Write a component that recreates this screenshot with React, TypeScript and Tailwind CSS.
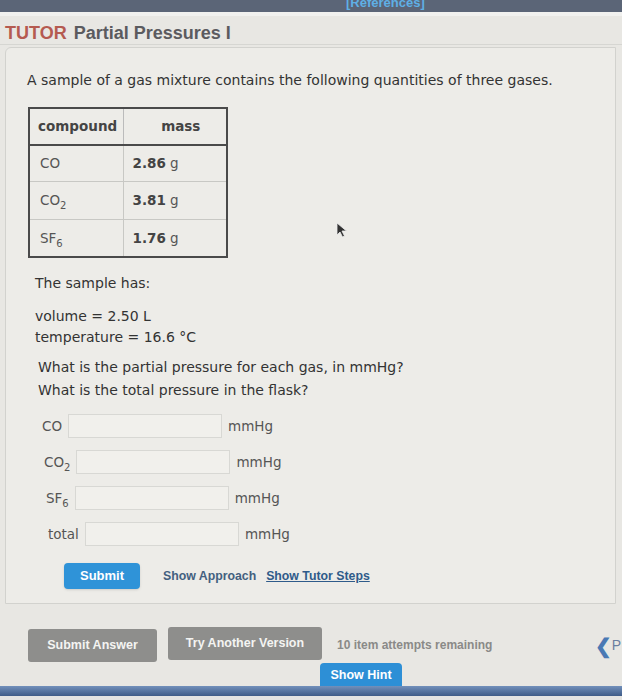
import React from 'react';

const body = { fontFamily: '"DejaVu Sans", Verdana, sans-serif' };
const arial = { fontFamily: '"Liberation Sans", Arial, sans-serif' };

function Sub({ base, n }: { base: string; n: string }) {
  return (
    <span>
      {base}
      <sub className="text-[10px] align-[-2px]">{n}</sub>
    </span>
  );
}

function AnswerRow({ label, pad }: { label: React.ReactNode; pad: string }) {
  return (
    <div className={`flex items-center h-[24px] ${pad}`}>
      <span className="text-[13.5px] text-[#555]">{label}</span>
      <div className="ml-[6px] w-[154px] h-[24px] border border-[#d8d8d4] bg-[#f1f0ec]" />
      <span className="ml-[6px] text-[13.5px] text-[#555]">mmHg</span>
    </div>
  );
}

export default function App() {
  return (
    <div className="relative w-[622px] h-[700px] overflow-hidden bg-[#e8e7e3]" style={body}>
      {/* top references bar */}
      <div className="h-[12px] bg-[#5b6577] overflow-hidden">
        <div className="pl-[346px] -mt-[5px] text-[13px] font-bold leading-[16px] text-[#5fb0e6]" style={arial}>
          [References]
        </div>
      </div>
      <div className="h-[4px] bg-[#f1f1ef]" />

      {/* title */}
      <div className="h-[29px] flex items-end pl-[5px] border-b border-[#d6d6d2]" style={arial}>
        <span className="text-[18px] font-bold text-[#b55a50] leading-none mb-[2px]">TUTOR</span>
        <span className="ml-[7px] text-[18px] font-bold text-[#5b5b5f] leading-none mb-[2px]">Partial Pressures I</span>
      </div>

      {/* question card */}
      <div className="ml-[5px] mr-[6px] mt-[2px] h-[557px] rounded-tl-md border border-[#d2d2ce] bg-[#edece8]">
        <p className="pl-[21px] pt-[22px] text-[14px] leading-[21px] text-[#333]">
          A sample of a gas mixture contains the following quantities of three gases.
        </p>

        <table className="ml-[22px] mt-[16px] w-[200px] border-2 border-[#4a4a4a] border-collapse text-[13.5px]">
          <thead>
            <tr className="h-[37px] border-b-2 border-[#4a4a4a]">
              <th className="w-[94px] text-left pl-[8px] font-bold text-[#444] border-r border-[#bbb]">compound</th>
              <th className="font-bold text-[#444] pl-[12px]">mass</th>
            </tr>
          </thead>
          <tbody className="text-[#555]">
            <tr className="h-[36px] border-b border-[#c8c8c4]">
              <td className="pl-[10px] border-r border-[#c8c8c4]">CO</td>
              <td className="pl-[9px]"><b className="text-[#444]">2.86</b> g</td>
            </tr>
            <tr className="h-[38px] border-b border-[#c8c8c4]">
              <td className="pl-[10px] border-r border-[#c8c8c4]"><Sub base="CO" n="2" /></td>
              <td className="pl-[9px]"><b className="text-[#444]">3.81</b> g</td>
            </tr>
            <tr className="h-[38px]">
              <td className="pl-[10px] border-r border-[#c8c8c4]"><Sub base="SF" n="6" /></td>
              <td className="pl-[9px]"><b className="text-[#444]">1.76</b> g</td>
            </tr>
          </tbody>
        </table>

        <div className="pl-[29px] text-[14px] text-[#333]">
          <p className="mt-[15px] leading-[21px]">The sample has:</p>
          <p className="mt-[12px] leading-[21px]">volume = 2.50 L</p>
          <p className="leading-[21px]">temperature = 16.6 °C</p>
          <p className="mt-[8px] leading-[23px] pl-[3px]">What is the partial pressure for each gas, in mmHg?</p>
          <p className="leading-[23px] pl-[3px]">What is the total pressure in the flask?</p>
        </div>

        <div className="mt-[12px] flex flex-col gap-[12px]">
          <AnswerRow label="CO" pad="pl-[36px]" />
          <AnswerRow label={<Sub base="CO" n="2" />} pad="pl-[38px]" />
          <AnswerRow label={<Sub base="SF" n="6" />} pad="pl-[40px]" />
          <AnswerRow label="total" pad="pl-[42px]" />
        </div>

        <div className="mt-[17px] pl-[58px] flex items-center" style={arial}>
          <button className="w-[76px] h-[26px] rounded-[4px] bg-[#2f93d8] text-white text-[13px] font-bold shadow-sm">
            Submit
          </button>
          <span className="ml-[23px] text-[12.3px] font-bold text-[#43607f]">Show Approach</span>
          <span className="ml-[10px] text-[12.3px] font-bold text-[#2f5b8a] underline">Show Tutor Steps</span>
        </div>
      </div>

      {/* bottom actions */}
      <div className="mt-[25px] pl-[28px] flex items-start" style={arial}>
        <button className="w-[129px] h-[33px] rounded-[3px] bg-[#8e8e8c] text-[#f4f4f2] text-[12.5px] font-bold">
          Submit Answer
        </button>
        <button className="ml-[11px] w-[154px] h-[33px] rounded-[3px] bg-[#8e8e8c] text-[#f4f4f2] text-[12.5px] font-bold -mt-[2px]">
          Try Another Version
        </button>
        <span className="ml-[15px] mt-[7px] text-[12px] font-bold text-[#8a8a88]">10 item attempts remaining</span>
        <span className="ml-auto mr-[1px] mt-[6px] flex items-center text-[14px] text-[#6a7fa0]">
          <span className="text-[20px] font-bold text-[#4a79b4] leading-none">❮</span>P
        </span>
      </div>

      <div className="absolute left-[320px] top-[663px] w-[82px] h-[24px] rounded-t-[4px] bg-[#2d8fd6] text-white text-[12.5px] font-bold flex items-center justify-center" style={arial}>
        Show Hint
      </div>
      <div className="absolute left-0 right-0 top-[686px] h-[10px] bg-gradient-to-b from-[#7290bb] to-[#3f5c88]" />
      <div className="absolute left-0 right-0 top-[696px] h-[4px] bg-[#e4e4e2]" />

      {/* mouse pointer */}
      <svg className="absolute left-[336px] top-[222px]" width="12" height="16" viewBox="0 0 12 16">
        <path d="M1 1 L1 13 L4 10 L6.5 15 L8.5 14 L6 9 L10.5 9 Z" fill="#333" stroke="#eee" strokeWidth="0.8" />
      </svg>
    </div>
  );
}
